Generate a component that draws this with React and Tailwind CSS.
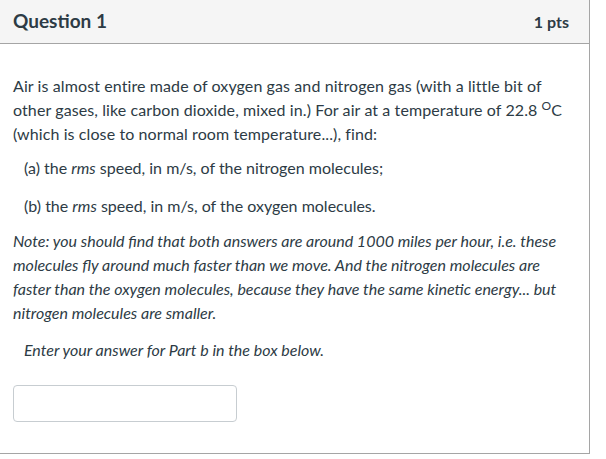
import React from 'react';

const App = () => {
    return (
        <div className="w-[606px] h-[459px] bg-white font-['Lato',sans-serif] text-[#2d3b45]">
            <div className="w-[590px] h-[454px] border-r border-b border-[#a5a5a5] flex flex-col">
                {/* Header */}
                <div className="h-[44px] bg-[#f5f5f5] border-b border-[#a5a5a5] flex items-center justify-between pl-[13px] pr-[20px]">
                    <h2 className="text-[19px] font-bold">Question 1</h2>
                    <span className="text-[16px] font-bold">1 pts</span>
                </div>

                {/* Body */}
                <div className="pl-[13px] pr-[12px] pt-[30px] text-[16px] leading-[24px]">
                    <p className="tracking-[0.1px]">
                        Air is almost entire made of oxygen gas and nitrogen gas (with a little bit of
                        other gases, like carbon dioxide, mixed in.) For air at a temperature of 22.8{' '}
                        <span className="relative -top-[6px] text-[12px] leading-none">O</span>C (which is close to normal room temperature...), find:
                    </p>
                    <p className="pl-[11px] mt-[10px]">
                        (a) the <em>rms</em> speed, in m/s, of the nitrogen molecules;
                    </p>
                    <p className="pl-[11px] mt-[14px]">
                        (b) the <em>rms</em> speed, in m/s, of the oxygen molecules.
                    </p>
                    <p className="italic mt-[11px]">
                        Note: you should find that both answers are around 1000 miles per hour, i.e. these
                        molecules fly around much faster than we move. And the nitrogen molecules are
                        faster than the oxygen molecules, because they have the same kinetic energy... but
                        nitrogen molecules are smaller.
                    </p>
                    <p className="italic pl-[11px] mt-[13px]">Enter your answer for Part b in the box below.</p>
                    <input
                        type="text"
                        className="mt-[23px] w-[224px] h-[37px] border border-[#c7cdd1] rounded-[4px] bg-white"
                    />
                </div>
            </div>
        </div>
    );
};

export default App;
